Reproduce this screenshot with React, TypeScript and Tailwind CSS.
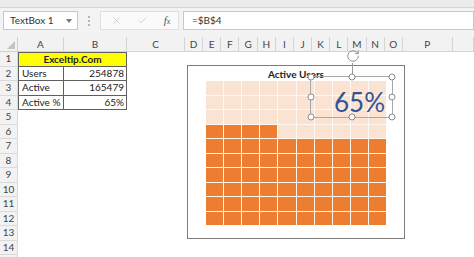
import { X, Check, RotateCw } from 'lucide-react'

const LETTERS = ['A', 'B', 'C', 'D', 'E', 'F', 'G', 'H', 'I', 'J', 'K', 'L', 'M', 'N', 'O', 'P', 'Q']
const ROWS = Array.from({ length: 15 }, (_, i) => i + 1)

const DATA: Record<number, [string, string]> = {
  2: ['Users', '254878'],
  3: ['Active', '165479'],
  4: ['Active %', '65%'],
}

function Waffle() {
  // 10x10 cells, filled from the bottom row up
  const cells = Array.from({ length: 100 }, (_, i) => {
    const r = Math.floor(i / 10)
    const c = i % 10
    return r >= 4 || (r === 3 && c < 4)
  })
  return (
    <div className="grid grid-cols-10 gap-px bg-[#fff7f0] w-[180px] h-[144px]">
      {cells.map((on, i) => (
        <div key={i} className={on ? 'bg-[#ed7d31]' : 'bg-[#fbe3d3]'} />
      ))}
    </div>
  )
}

function Handle({ pos }: { pos: string }) {
  return (
    <div
      className={`absolute w-[7px] h-[7px] rounded-full border border-[#8c8c8c] bg-white -translate-x-1/2 -translate-y-1/2 ${pos}`}
    />
  )
}

function TextBoxSelection() {
  return (
    <div className="absolute left-[122px] top-[10px] w-[83px] h-[42px] border border-[#a8a8a8]">
      <div className="flex h-full justify-end items-center pr-[7px] pt-[9px] text-[26px] leading-none text-[#2f5597]">
        65%
      </div>
      <div className="absolute left-1/2 -top-[14px] h-[14px] w-px bg-[#9a9a9a]" />
      <RotateCw className="absolute left-[35px] -top-[28px] text-[#8c8c8c]" size={14} strokeWidth={1.6} />
      <Handle pos="left-0 top-0" />
      <Handle pos="left-1/2 top-0" />
      <Handle pos="left-full top-0" />
      <Handle pos="left-0 top-1/2" />
      <Handle pos="left-full top-1/2" />
      <Handle pos="left-0 top-full" />
      <Handle pos="left-1/2 top-full" />
      <Handle pos="left-full top-full" />
    </div>
  )
}

function Chart() {
  return (
    <div className="absolute left-[187px] top-[28px] w-[218px] h-[174px] border border-[#7d7d7d] bg-white flex flex-col items-center">
      <div className="h-[15px] leading-[15px] text-[10px] font-bold text-[#222] pt-px">Active Users</div>
      <Waffle />
      <TextBoxSelection />
    </div>
  )
}

function Sheet() {
  return (
    <div className="relative flex-1 overflow-hidden bg-white">
      <div className="grid grid-cols-[18px_46px_63px_58px_repeat(12,18.17px)_50px_1fr] grid-rows-[15px_repeat(15,14.5px)] text-[10px] text-[#222]">
        {/* corner */}
        <div className="relative bg-[#f2f2f2] border-r border-b border-[#cfcfcf]">
          <svg className="absolute right-[2px] bottom-[2px]" width="8" height="8" viewBox="0 0 8 8">
            <polygon points="8,0 8,8 0,8" fill="#c4c4c4" />
          </svg>
        </div>
        {LETTERS.map((l) => (
          <div
            key={l}
            className="bg-[#f2f2f2] border-r border-b border-[#d4d4d4] flex items-center justify-center text-[#444]"
          >
            {l === 'Q' ? '' : l}
          </div>
        ))}

        {ROWS.map((r) => {
          const head = (
            <div
              key={`h${r}`}
              className="bg-[#f2f2f2] border-r border-b border-[#dadada] flex items-center justify-center text-[#444]"
            >
              {r < 15 ? r : ''}
            </div>
          )
          const rest = LETTERS.slice(2).map((l) => <div key={`${l}${r}`} />)
          if (r === 1) {
            return [
              head,
              <div
                key="A1"
                className="col-span-2 bg-[#ffff00] border border-[#5f5f5f] flex items-center justify-center font-bold"
              >
                Exceltip.Com
              </div>,
              ...rest,
            ]
          }
          if (DATA[r]) {
            const [a, b] = DATA[r]
            return [
              head,
              <div key={`A${r}`} className="border-l border-r border-b border-[#5f5f5f] flex items-center pl-[3px]">
                {a}
              </div>,
              <div key={`B${r}`} className="border-r border-b border-[#5f5f5f] flex items-center justify-end pr-[2px]">
                {b}
              </div>,
              ...rest,
            ]
          }
          return [head, <div key={`A${r}`} />, <div key={`B${r}`} />, ...rest]
        })}
      </div>
      <Chart />
    </div>
  )
}

function FormulaBar() {
  return (
    <div className="bg-[#f3f3f3]">
      <div className="h-[8px] bg-[#ececec] border-b border-[#d6d6d6]" />
      <div className="flex items-center h-[29px] pt-[1px] pb-[5px] text-[10px] text-[#333]">
        <div className="ml-[3px] w-[75px] h-[19px] bg-white border border-[#c8c8c8] flex items-center justify-between pl-[6px] pr-[5px]">
          <span>TextBox 1</span>
          <svg width="6" height="4" viewBox="0 0 6 4">
            <polygon points="0,0 6,0 3,4" fill="#777" />
          </svg>
        </div>
        <div className="w-[22px] flex flex-col items-center gap-[2px]">
          <div className="w-[2px] h-[2px] bg-[#b5b5b5]" />
          <div className="w-[2px] h-[2px] bg-[#b5b5b5]" />
          <div className="w-[2px] h-[2px] bg-[#b5b5b5]" />
        </div>
        <div className="w-[79px] h-[19px] bg-[#fafafa] border border-[#e0e0e0] flex items-center justify-around pl-[2px]">
          <X size={11} className="text-[#bdbdbd]" strokeWidth={1.5} />
          <Check size={11} className="text-[#bdbdbd]" strokeWidth={1.5} />
          <span className="italic text-[#555] text-[11px] font-['Liberation_Serif',serif]">
            f<span className="text-[8px]">x</span>
          </span>
        </div>
        <div className="ml-[4px] flex-1 h-[19px] bg-white border border-[#c8c8c8] flex items-center pl-[8px]">
          =$B$4
        </div>
      </div>
    </div>
  )
}

export default function App() {
  return (
    <div className="w-[474px] h-[257px] overflow-hidden flex flex-col font-['Lato','Liberation_Sans',sans-serif]">
      <FormulaBar />
      <Sheet />
    </div>
  )
}
